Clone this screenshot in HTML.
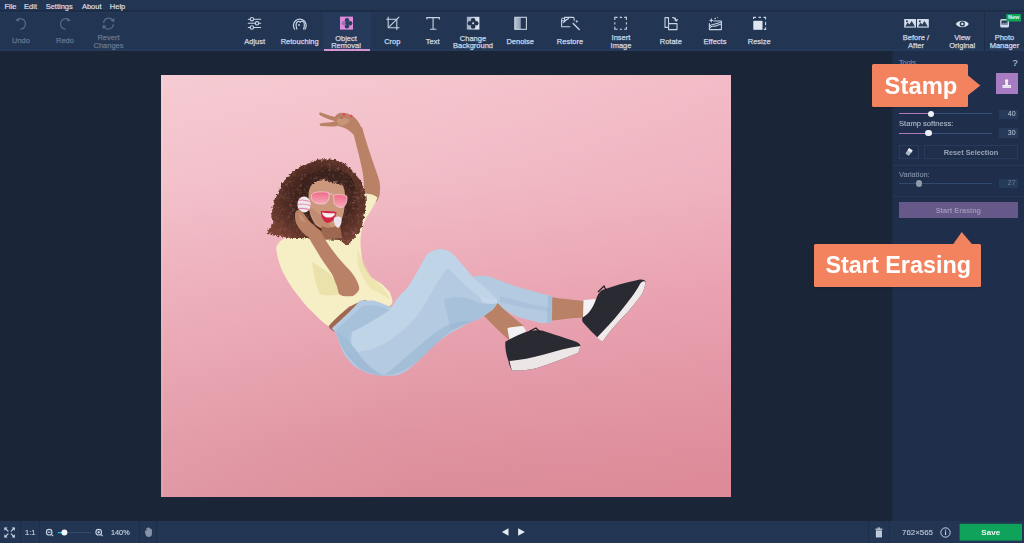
<!DOCTYPE html>
<html><head><meta charset="utf-8"><style>
*{margin:0;padding:0;box-sizing:border-box}
html,body{width:1024px;height:543px;overflow:hidden;background:#1a2537;font-family:"Liberation Sans",sans-serif}
.abs{position:absolute}
.lbl{position:absolute;line-height:8px;height:8px;color:#cdd6e3;text-align:center;white-space:nowrap;-webkit-text-stroke:0.25px currentColor}
.dis{color:#62758f}
svg{position:absolute;left:0;top:0;overflow:visible}
</style></head><body>
<div class="abs" style="left:0;top:0;width:1024px;height:51px;background:#223653"></div>
<div class="abs" style="left:0;top:10.3px;width:1024px;height:1.6px;background:#1d2d46"></div>
<div class="abs" style="left:0;top:11.9px;width:1024px;height:1px;background:#24395a"></div>
<div class="abs" style="left:0;top:48.6px;width:1024px;height:2.4px;background:#243a5a"></div>
<div class="abs" style="left:323px;top:12px;width:48px;height:39px;background:#263b5b"></div>
<div class="abs" style="left:324px;top:49.4px;width:46px;height:1.4px;background:#d592d4"></div>
<div class="abs" style="left:0;top:51px;width:892px;height:470px;background:#1a2537"></div>
<div class="abs" style="left:892px;top:51px;width:132px;height:470px;background:#1f2e4a"></div>
<div class="abs" style="left:891px;top:51px;width:1.5px;height:470px;background:#1c2840"></div>
<div class="abs" style="left:0;top:521px;width:1024px;height:22px;background:#223553"></div>
<div class="abs" style="left:4.4px;top:1.8px;font-size:7.5px;line-height:9px;color:#d8dfe9;-webkit-text-stroke:0.2px currentColor">File</div>
<div class="abs" style="left:24.1px;top:1.8px;font-size:7.5px;line-height:9px;color:#d8dfe9;-webkit-text-stroke:0.2px currentColor">Edit</div>
<div class="abs" style="left:45.7px;top:1.8px;font-size:7.5px;line-height:9px;color:#d8dfe9;-webkit-text-stroke:0.2px currentColor">Settings</div>
<div class="abs" style="left:81.9px;top:1.8px;font-size:7.5px;line-height:9px;color:#d8dfe9;-webkit-text-stroke:0.2px currentColor">About</div>
<div class="abs" style="left:109.8px;top:1.8px;font-size:7.5px;line-height:9px;color:#d8dfe9;-webkit-text-stroke:0.2px currentColor">Help</div>
<div class="lbl dis" style="left:-19.0px;top:37.3px;width:80px;font-size:7.5px;">Undo</div>
<div class="lbl dis" style="left:25.0px;top:37.3px;width:80px;font-size:7.5px;">Redo</div>
<div class="lbl dis" style="left:68.5px;top:34.4px;width:80px;font-size:7.5px;">Revert</div>
<div class="lbl dis" style="left:68.5px;top:41.7px;width:80px;font-size:7.5px;">Changes</div>
<div class="lbl " style="left:214.7px;top:37.6px;width:80px;font-size:7.5px;">Adjust</div>
<div class="lbl " style="left:259.7px;top:37.6px;width:80px;font-size:7.5px;">Retouching</div>
<div class="lbl " style="left:306.0px;top:34.5px;width:80px;font-size:7.5px;">Object</div>
<div class="lbl " style="left:306.0px;top:41.5px;width:80px;font-size:7.5px;">Removal</div>
<div class="lbl " style="left:352.3px;top:37.5px;width:80px;font-size:7.5px;">Crop</div>
<div class="lbl " style="left:392.7px;top:37.5px;width:80px;font-size:7.5px;">Text</div>
<div class="lbl " style="left:433.0px;top:34.6px;width:80px;font-size:7.5px;">Change</div>
<div class="lbl " style="left:433.0px;top:41.6px;width:80px;font-size:7.5px;">Background</div>
<div class="lbl " style="left:480.2px;top:37.5px;width:80px;font-size:7.5px;">Denoise</div>
<div class="lbl " style="left:530.0px;top:37.5px;width:80px;font-size:7.5px;">Restore</div>
<div class="lbl " style="left:581.0px;top:34.3px;width:80px;font-size:7.5px;">Insert</div>
<div class="lbl " style="left:581.0px;top:41.9px;width:80px;font-size:7.5px;">Image</div>
<div class="lbl " style="left:630.8px;top:37.5px;width:80px;font-size:7.5px;">Rotate</div>
<div class="lbl " style="left:675.0px;top:37.5px;width:80px;font-size:7.5px;">Effects</div>
<div class="lbl " style="left:719.2px;top:37.5px;width:80px;font-size:7.5px;">Resize</div>
<div class="lbl " style="left:876.0px;top:34.1px;width:80px;font-size:7.5px;">Before /</div>
<div class="lbl " style="left:876.0px;top:41.9px;width:80px;font-size:7.5px;">After</div>
<div class="lbl " style="left:922.2px;top:34.1px;width:80px;font-size:7.5px;">View</div>
<div class="lbl " style="left:922.2px;top:41.9px;width:80px;font-size:7.5px;">Original</div>
<div class="lbl " style="left:964.5px;top:34.1px;width:80px;font-size:7.5px;">Photo</div>
<div class="lbl " style="left:964.5px;top:41.9px;width:80px;font-size:7.5px;">Manager</div>
<div class="abs" style="left:984px;top:11px;width:1px;height:40px;background:#1c2c45"></div>
<svg width="1024" height="51" viewBox="0 0 1024 51"><path d="M17.2 19.6 A5.3 5.3 0 1 1 21 29.2" stroke="#566a89" stroke-width="1.2" fill="none" stroke-linecap="round"/><path d="M15.2 20.4 L19.2 17.8 L18.9 21.6Z" fill="#566a89"/><path d="M68.8 19.6 A5.3 5.3 0 1 0 65 29.2" stroke="#566a89" stroke-width="1.2" fill="none" stroke-linecap="round"/><path d="M70.8 20.4 L66.8 17.8 L67.1 21.6Z" fill="#566a89"/><path d="M103.6 23 A5.2 5.2 0 0 1 112.6 19.8" stroke="#566a89" stroke-width="1.2" fill="none"/><path d="M113.4 24.2 A5.2 5.2 0 0 1 104.4 27.4" stroke="#566a89" stroke-width="1.2" fill="none"/><path d="M114.4 17.8 L114.3 21.9 L110.5 21Z" fill="#566a89"/><path d="M102.6 29.2 L102.7 25.1 L106.5 26Z" fill="#566a89"/><g stroke="#c8d3e4" stroke-width="1.1" fill="none" stroke-linecap="round" stroke-linejoin="round"><path d="M248.3 19.2H250.2M253.6 19.2H260.7M248.3 23.3H255.3M258.7 23.3H260.7M248.3 27.5H250.2M253.6 27.5H260.7"/><circle cx="251.9" cy="19.2" r="1.7"/><circle cx="257" cy="23.3" r="1.7"/><circle cx="251.9" cy="27.5" r="1.7"/></g><g stroke="#c8d3e4" stroke-width="1.2" fill="none" stroke-linecap="round"><path d="M294.6 29.2 A6.4 6.4 0 1 1 305 29.2"/><path d="M296.8 29 C296 26.5 296 23 297.4 21.8 C298.4 21 299.4 21.4 300.2 22.2 C301 21 302.6 20.8 303.5 21.8 C304.7 23 304.6 26.6 303.6 29"/></g><circle cx="299" cy="25" r="0.9" fill="#c8d3e4"/><rect x="340" y="16.6" width="13" height="13" fill="#dc8ad9"/><g fill="#2b3f60"><circle cx="347" cy="20.2" r="2.2"/><circle cx="350.1" cy="23.2" r="2.2"/><circle cx="347" cy="26.3" r="2.2"/></g><circle cx="343.9" cy="23.2" r="2.2" fill="#a070ae"/><circle cx="347" cy="23.2" r="1.6" fill="#2b3f60"/><g stroke="#c8d3e4" stroke-width="1.1" fill="none" stroke-linecap="round" stroke-linejoin="round"><path d="M388.2 17V27.7H399"/><path d="M386.6 19.3H396.8V29.5"/><path d="M389.6 26.4L398.9 17.1"/></g><g stroke="#c8d3e4" stroke-width="1.1" fill="none"><path d="M426.8 19.6V17.6H439.4V19.6M433.1 17.6V29.2M430 29.2H436.4"/></g><defs><linearGradient id="cbg" x1="0" x2="1"><stop offset="0" stop-color="#9aa8bd"/><stop offset="0.5" stop-color="#c8d3e4"/><stop offset="1" stop-color="#dfe6f0"/></linearGradient></defs><rect x="466.8" y="16.8" width="12.6" height="12.8" fill="url(#cbg)"/><g fill="#22324e"><circle cx="473.1" cy="20.2" r="2.3"/><circle cx="476.2" cy="23.3" r="2.3"/><circle cx="473.1" cy="26.4" r="2.3"/><circle cx="470" cy="23.3" r="2.3"/><circle cx="473.1" cy="23.3" r="1.8"/></g><circle cx="473.1" cy="23.3" r="1" fill="#dfe6f0"/><defs><linearGradient id="dng" x1="0" x2="1"><stop offset="0" stop-color="#b8c3d3"/><stop offset="1" stop-color="#8d9bb1"/></linearGradient></defs><rect x="514.8" y="17.3" width="6" height="12" fill="url(#dng)"/><rect x="514.8" y="17.3" width="11.6" height="12" stroke="#c8d3e4" stroke-width="1.1" fill="none"/><g stroke="#c8d3e4" stroke-width="1.1" fill="none" stroke-linecap="round" stroke-linejoin="round"><path d="M564.5 17.4H573 C573.8 17.4 574.2 18 574.2 19V20.2"/><path d="M561.6 19.6V26.8H569.8"/><path d="M561.8 18.2H564.6V20.8H562"/><path d="M563.2 22.6 C565 21.5 566 19.2 568.6 18.6"/><path d="M573.2 23.6 L579.2 29.4" stroke-width="1.4"/><path d="M576.8 20.6V22.2M576 21.4H577.6" stroke-width="0.9"/></g><g stroke="#c8d3e4" stroke-width="1.1" fill="none"><path d="M614.8 20V17.4H617.5M619.8 17.4H622M624.2 17.4H626.4V20M626.4 22.2V24.4M626.4 26.7V29.3H624.2M622 29.3H619.8M617.5 29.3H614.8V26.7M614.8 24.4V22.2"/></g><g stroke="#c8d3e4" stroke-width="1.1" fill="none" stroke-linecap="round" stroke-linejoin="round"><path d="M668.5 23.3V17.6H665V27.4H668.2"/><rect x="668.6" y="23.6" width="8.4" height="6"/><path d="M672.6 17.6 C674.5 17.6 676 18.6 676.2 20.6"/><path d="M674.8 19.6L676.2 21L677.6 19.6"/></g><g stroke="#c8d3e4" stroke-width="1.1" fill="none" stroke-linecap="round" stroke-linejoin="round"><path d="M714 21H721.4V29.6H709.4V23.5"/><path d="M709.6 28 C712 25 714 26.5 716 26 C718 25.5 719.5 24 721.2 24.2"/><path d="M709.6 26 C711.5 24 713 24.5 715 24 C717 23.5 718.5 22.5 721.2 22.5"/></g><path d="M711.3 17.8 L712 19.7 L713.9 20.4 L712 21.1 L711.3 23 L710.6 21.1 L708.7 20.4 L710.6 19.7Z" fill="#c8d3e4"/><circle cx="715.2" cy="18.5" r="0.8" fill="#c8d3e4"/><circle cx="717.6" cy="17.3" r="0.5" fill="#c8d3e4"/><rect x="753.3" y="20.8" width="9.2" height="9" fill="#dfe6f2"/><g stroke="#c8d3e4" stroke-width="1.1" fill="none"><path d="M753.6 19V17.4H756M758.5 17.4H761M763.5 17.4H765.6V19.5M765.6 21.8V25.2M765.6 27.2V29.4H763.8"/></g><rect x="904.2" y="19" width="11.8" height="8.6" fill="#d3dcea"/><path d="M905.2 26.6 L907.7 22.5 L909.4000000000001 24.5 L911.7 21 L915.0 26.6Z" fill="#2a3b58"/><circle cx="907.0" cy="21.3" r="1" fill="#2a3b58"/><rect x="917.0" y="19" width="11.8" height="8.6" fill="#d3dcea"/><path d="M918.0 26.6 L920.5 22.5 L922.2 24.5 L924.5 21 L927.8 26.6Z" fill="#2a3b58"/><circle cx="919.8" cy="21.3" r="1" fill="#2a3b58"/><path d="M955.8 23.9 C958.5 19.6 966 19.6 968.8 23.9 C966 28.2 958.5 28.2 955.8 23.9Z" fill="#dbe3ef"/><circle cx="962.3" cy="23.9" r="2.6" fill="#2a3b58"/><circle cx="962.3" cy="23.9" r="1.2" fill="#dbe3ef"/><rect x="1000.2" y="19" width="8.8" height="8.6" rx="1.5" fill="#d3dcea"/><rect x="1001.5" y="20.5" width="6.2" height="4" fill="#2a3b58"/><path d="M1001.5 24.5L1003.5 22.5L1005 23.8L1007.7 21.5V24.5Z" fill="#8796ad"/><rect x="1006.3" y="14" width="14.7" height="7.5" fill="#12a35b"/></svg>
<div class="abs" style="left:1006.3px;top:14px;width:14.7px;height:7.5px;font-size:5.5px;line-height:7.5px;font-weight:bold;color:#e8f6ee;text-align:center">New</div>
<div class="abs" style="left:161px;top:75px;width:570px;height:422px;background:linear-gradient(180deg,#f5c6ce 0%,#f1bcc6 25%,#eba9b6 50%,#e49ca9 72%,#df929f 88%,#dc8d9a 100%)"></div>
<div class="abs" style="left:161.5px;top:75px;width:1px;height:422px;background:rgba(255,235,240,0.12)"></div>
<div class="abs" style="left:161px;top:75px;width:570px;height:422px;background:linear-gradient(90deg,rgba(255,236,240,0.12) 0%,rgba(255,236,240,0) 45%,rgba(225,110,140,0.12) 100%)"></div>
<svg style="left:161px;top:75px" width="570" height="422" viewBox="161 75 570 422"><defs><filter id="soft" x="-5%" y="-5%" width="110%" height="110%"><feGaussianBlur stdDeviation="0.45"/></filter></defs><g filter="url(#soft)"><path d="M351 131 C355 129 359 128 362 127 C366 142 371 156 375 168 C378 176 381 184 380 190 C380 196 378 200 376 202 L365 200 C364 190 364 182 363 174 C361 162 357 148 353.5 134Z" fill="#b98165"/><path d="M319.2 113.8 C319 112.6 320.4 112.2 321.6 112.8 C326 114.6 331 116.2 336 117.2 L337 121.6 C331 120.6 325 118 320.4 115.6 C319.8 115.2 319.3 114.6 319.2 113.8Z" fill="#b98165"/><path d="M319.6 124.6 C319.6 123.6 320.6 123.2 321.6 123.2 C326 122.8 331 122.4 336 121.6 L337 126.2 C331 126.6 326 126.4 321.4 126 C320.4 125.8 319.7 125.4 319.6 124.6Z" fill="#b98165"/><path d="M334.5 117.5 C336 114.5 339 112.6 342.5 112.8 C346 113 349 114 352 115.5 C356 118 359.5 123 361.6 128 L361.6 131 L353.5 134.5 C350 131 346 128 341 126.8 C338 126.4 335.5 125 334.5 122.5Z" fill="#b98165"/><path d="M337 119 C340 117 346 117.5 350 120 C348 124 344 126 340 125.5 C337.5 124 336.5 122 337 119Z" fill="#c99a80" opacity="0.8"/><circle cx="343.9" cy="114.6" r="1.3" fill="#ee3d5a"/><circle cx="351.3" cy="116" r="1.2" fill="#ee3d5a"/><circle cx="341.6" cy="118.2" r="0.9" fill="#d8445a"/><path d="M276.1 247.3 C277 245 279 243 280.1 241.2 C284 238.5 288 236.5 292.3 235.1 C297 233.5 303 232 308.5 231.1 C315 231 322 232 328.7 233.1 C334 235 340 238 345 241.2 L352 240 C355 232 358 224 361 216 C362 208 363 200 364 194 C368 193.5 373 194 377.5 197.5 C375 204 371 211 366 218 C362 226 360.5 234 360.5 242 C360.5 248 361.5 256 363.2 265.5 C366 270 368 274 371.3 277.6 C375 280 378 282 381.4 283.7 C384 286 387 289 389.5 291.8 C391 295 392 298 392.5 301.9 C392 304 391 305 389.5 306 C387 307 384 308 381.4 308 C376 306 371 304 367 302 C360 304 354 306 349 306 C344 312 338 318 334.8 320.2 C332 322 330 324 328.7 326.2 C323 323 318 318 312.5 312.1 C307 307 302 301 298.4 295.9 C294 291 291 286 288.2 281.7 C285 276 282 271 280.1 265.5 C278 259 276.5 253 276.1 247.3Z" fill="#f6efc5"/><path d="M312 262 C318 266 326 270 332 276 C336 282 338 288 339 294 C332 296 326 296 320 294 C316 286 314 276 312 262Z" fill="#e9dea4" opacity="0.8"/><path d="M357 249 C362 258 366 268 372 278 C380 284 386 290 391 300 C384 296 378 292 372 290 C366 284 362 276 358 266Z" fill="#e9dea4" opacity="0.6"/><defs><radialGradient id="hg" cx="0.55" cy="0.45" r="0.6"><stop offset="0" stop-color="#2e1a16"/><stop offset="0.55" stop-color="#4a2821"/><stop offset="1" stop-color="#7a4234"/></radialGradient><filter id="frizz" x="-10%" y="-10%" width="120%" height="120%"><feTurbulence type="fractalNoise" baseFrequency="0.35" numOctaves="2" seed="3" result="n"/><feDisplacementMap in="SourceGraphic" in2="n" scale="5" xChannelSelector="R" yChannelSelector="G"/><feGaussianBlur stdDeviation="0.4"/></filter><filter id="htex" x="0" y="0" width="100%" height="100%"><feTurbulence type="turbulence" baseFrequency="0.25" numOctaves="2" seed="5"/><feColorMatrix values="0 0 0 0 0.62  0 0 0 0 0.35  0 0 0 0 0.28  1.6 0 0 0 -0.45"/><feComposite in2="SourceGraphic" operator="in"/></filter></defs><g filter="url(#frizz)"><path d="M265.7 233.8 C268 230 271 227 273 223.7 C271 219 271 214 272.1 210.8 C273 205 274 200 276.7 196 C279 190 281 185 284.1 181.3 C288 176 291 173 295.2 170.3 C300 166 305 164 309.9 162.9 C315 160 320 159 324.6 159.2 C330 159 335 160 339.4 161 C344 163 347 165 350.4 168.4 C354 172 357 176 359.7 179.5 C362 184 364 189 365.2 194.2 C366 200 366 205 365.2 210.8 C365 216 363 222 361.5 227.4 C359 232 357 235 354.1 238.4 C352 241 349 243 346.8 245.8 L340 240 L300 238 C292 238 286 238 280.4 236.6 C276 236 271 235 265.7 233.8Z" fill="url(#hg)"/><path d="M265.7 233.8 C268 230 271 227 273 223.7 C271 219 271 214 272.1 210.8 C273 205 274 200 276.7 196 C279 190 281 185 284.1 181.3 C288 176 291 173 295.2 170.3 C300 166 305 164 309.9 162.9 C315 160 320 159 324.6 159.2 C330 159 335 160 339.4 161 C344 163 347 165 350.4 168.4 C354 172 357 176 359.7 179.5 C362 184 364 189 365.2 194.2 C366 200 366 205 365.2 210.8 C365 216 363 222 361.5 227.4 C359 232 357 235 354.1 238.4 C352 241 349 243 346.8 245.8 L340 240 L300 238 C292 238 286 238 280.4 236.6 C276 236 271 235 265.7 233.8Z" fill="#000" filter="url(#htex)" opacity="0.4"/></g><path d="M308.5 196 C308.5 187 313 180.5 321 179 C330 177.5 339 180 343 186 C346 192 345.5 202 344 211 C343 218 340 225 334 228.5 C329 230.5 322 229.5 317 226 C312 221 309 213 308.6 205Z" fill="#cb987e"/><path d="M309 206 C311 214 314 221 319 226 C324 229.5 330 230 334 228.5 C330 226 326 222 322 216 C316 212 312 208 309 206Z" fill="#b98266" opacity="0.6"/><g filter="url(#frizz)"><path d="M302 184 C305 176 313 170 323 168.5 C334 168 344 170 350 176 C354 182 355 188 353 193 C350 188 345 184.5 340 183.5 C336 182 333 183 330 181.5 C326 179.5 322 179 318 180 C313 181.5 310 186 307 190 L304.5 194Z" fill="#3a211b"/><path d="M302 184 C305 176 313 170 323 168.5 C334 168 344 170 350 176 C354 182 355 188 353 193 C350 188 345 184.5 340 183.5 C336 182 333 183 330 181.5 C326 179.5 322 179 318 180 C313 181.5 310 186 307 190 L304.5 194Z" fill="#000" filter="url(#htex)" opacity="0.4"/></g><defs><linearGradient id="lens" x1="0" y1="0" x2="0" y2="1"><stop offset="0" stop-color="#ef6a88"/><stop offset="1" stop-color="#f6a9b9"/></linearGradient></defs><path d="M311.5 194.5 C314 191.5 322 191.3 328.6 192.6 C330 196.5 329 201.5 325.5 203.5 C320 204.8 314.5 203.5 312.2 200.5 C311.4 198.5 311.2 196.5 311.5 194.5Z" fill="url(#lens)" stroke="#f4d2da" stroke-width="0.7"/><path d="M333.6 195.5 C337 194 343.5 194.2 347 196.6 C347.5 201 346 206 342.5 207.4 C338.5 207.8 335 205.8 334 202.5Z" fill="url(#lens)" stroke="#f4d2da" stroke-width="0.7"/><path d="M328.6 194 C330.5 193.4 332 193.8 333.6 195.5" stroke="#f4d2da" stroke-width="0.7" fill="none"/><path d="M320.8 211 C326 210.8 331.5 211 336.6 212 C336 217 333 222.5 328 223 C323.5 223 321 217 320.8 211Z" fill="#d12b47"/><path d="M322 212.4 C326 213 331 213.2 335.2 213.4 C334.5 216 332 217.6 328 217.6 C324.6 217.4 322.6 215 322 212.4Z" fill="#f7f1f3"/><path d="M322 226 C328 229 334 228 340 224 L342 238 L320 240Z" fill="#9d684f"/><ellipse cx="304" cy="204.5" rx="6.6" ry="8" fill="#efe8ee"/><path d="M298.5 200.5 C301.5 199.5 305.5 200 309.5 201.5 M297.8 204.5 C301.5 203.5 305.5 204 310.2 205.5 M298.6 208.6 C301.8 208 305.5 208.5 309.2 209.6" stroke="#e48aa4" stroke-width="1.1" fill="none"/><path d="M334 218 C337 216 340 216 341.5 218 C342 222 341 226 338 228 C336 227 334.5 225 334 222Z" fill="#ece4ea"/><path d="M306.5 233 C311 231 316 230 320.6 231 C325 240 330 247 334.8 253.3 C339 259 344 264 349 269.5 C353 274 356 278 358.1 283.7 C359 286 359.5 288 359.1 289.8 C358 292 356 294 353 295.9 C350 296.5 346 296.5 342.9 295.9 C340 295 339 294 338.9 293.8 C338 291 337.5 288 336.8 285.7 C335 282 334 279 332.8 275.6 C329 269 324 263 320.6 257.4 C317 251 312 244 308.5 237.1Z" fill="#b98165"/><path d="M295 214 C295.5 210.5 298 209 300.5 210.5 C303 212 305 215 307 218 C309 221 313 225 317 228 C319 229.5 320.5 230.5 321 232 C318 235 313 237 308.5 237 C303 234 299 229 296.5 224 C295 220 294.8 217 295 214Z" fill="#b98165"/><path d="M298.5 213 C301 214.5 303.5 218 306 222 C303 222.5 300.5 220.5 299 217Z" fill="#c99a80" opacity="0.7"/><path d="M328.7 326.2 C333 321 340 314 348 308 C354 304 360 301 366 300 L368 304 C360 308 352 314 344 320 C340 324 337 328 335.5 332 C332 331 330 329 328.7 326.2Z" fill="#9d684f"/><path d="M470 280 C474 277 476 276 477.9 275.6 C482 276 486 276 489.5 276.5 C498 280 507 283 516 286.4 C527 289.5 538 292.5 549.2 295.5 L552.5 296.4 C553 305 552.5 314 551.7 322.9 C548 323 544.5 323 541 322.9 C533 321 524 319 516 316.3 C510 313 504 310 499.5 306.3 L480 300Z" fill="#b3cae1"/><path d="M548 296 L552.5 296.4 C553 305 552.5 314 551.7 322.9 L547 322.9 C547.5 314 548 305 548 296Z" fill="#9ab5d2" opacity="0.6"/><path d="M500 296 C512 299 530 304 550 308 L550 312 C530 309 514 306 500 302Z" fill="#9ab5d2" opacity="0.35"/><path d="M552.3 297.3 C562 299 574 300 585 301 L583.5 317.5 C572 318 562 319.5 552 320.5Z" fill="#b98165"/><path d="M483 306 C488 303 494 300 497.8 303 C504 310 514 318 524 326 L510 341 C502 334 492 324 484 316Z" fill="#b98165"/><path d="M332 328.5 C333 327 334 326 335.5 325 C342 319 352 310 360 300.5 L374 300.5 C380 302 386 305 391.4 307.5 C394 303 397 298.5 400.2 295.2 C402 293 404 291 405.4 290 C412 282 418 270 426.5 254.9 C430 252 435 249.5 439.8 249.1 C443 249 446 250 449.7 251.6 C453 254 456 257 458 259.9 C462 264 466 269 469.6 273.2 C472 276 475 279 478 281.5 C482 285 486 288 489.5 291.4 C492 294 494 296 496.2 298 C497 299.5 497.5 301 497.8 303 C496 305.5 494.5 307.5 492.9 309.6 C489 312.5 485 315 481.2 317.9 C478 319.5 475.5 320.5 473 321.2 C466 324 460 328 454 331 C447 335 440 340 433.4 346 C428 351 424 356 419.4 360 C415 364 411 367 407.2 370.4 C403 373 399 375 395 375.7 L381 375.7 C376 375 370 374 365.2 372.2 C361 370 357 368 353 365.2 C350 362 347 358 344.2 354.7 C342 350 340.5 346 339 342.5 C337.5 339 336.5 335.5 335.5 332 C334.5 331 333 330 332 328.5Z" fill="#b3cae1"/><path d="M391.4 307.5 C394 303 397 298.5 400.2 295.2 C402 293 404 291 405.4 290 C412 282 418 270 426.5 254.9 C430 252 435 249.5 439.8 249.1 C443 249 446 250 449.7 251.6 C453 254 456 257 458 259.9 C462 264 466 269 469.6 273.2 C472 276 475 279 478 281.5 C482 285 486 288 489.5 291.4 C492 294 494 296 496.2 298 C490 300 484 300 478 296 C468 288 456 276 448 268 C440 276 432 292 424 306 C414 322 400 334 384 344 C372 350 362 352 354 352 C350 346 348 340 348 334 C364 326 378 318 391.4 307.5Z" fill="#c3d6ea" opacity="0.8"/><path d="M444 300 C452 296 462 296 472 300 C480 304 488 306 497 303 C494 308 488 312 481 318 C472 322 462 326 452 330 C448 320 446 310 444 300Z" fill="#9ab5d2" opacity="0.45"/><path d="M336 332 C340 346 348 360 362 370 C368 373 376 375 384 376 C372 370 362 360 356 350 C350 342 344 336 336 332Z" fill="#9ab5d2" opacity="0.7"/><path d="M336 330 C342 324 352 316 362 306 L372 305 C380 306 386 308 390 310 C378 318 364 326 352 332 C350 342 352 352 358 360 C348 354 340 344 336 330Z" fill="#a3bdd8" opacity="0.7"/><path d="M384 375.5 C399 375 411 367 419.4 360 C428 351 440 340 447.4 333.7 C455 328 466 323 473 321 C464 320 454 322 446 326 C434 332 424 342 412 352 C402 360 394 368 384 375.5Z" fill="#9ab5d2" opacity="0.6"/><path d="M480 296 C486 299 492 300 496.2 298 C497 299.5 497.5 301 497.8 303 C494 304 488 304 482 302Z" fill="#c9dbec" opacity="0.8"/><path d="M507.5 328 C512 327 518 326 523 326 C526 330 528 336 529 343 C524 345 518 347 512 348 C510 342 508 334 507.5 328Z" fill="#f3f1f3"/><path d="M583.5 300 L595.5 299 L597 316 L583 317.5Z" fill="#f3f1f3"/><path d="M596 299.5 C598 294 600 291 603 289.8 C614 286 626 282 637.8 279.9 C642 279 646 280 645.6 282 C645 286 644 290 642 294 C636 302 630 310 622 318 C614 326 608 334 602.5 341.7 C600 340 598 338 596 336 C590 330 585 325 582.6 321.8 C582 320 582 319 582.5 317.5 C588 315 593 308 596 299.5Z" fill="#2a2a33"/><path d="M645.6 282 C645 286 644 290 642 294 C636 302 630 310 622 318 C614 326 608 334 602.5 341.7 C600 340 598.5 339 597 337.5 C604 330 612 322 620 312 C628 302 636 292 640 284 C642 281 644 280.5 645.6 282Z" fill="#efe9ea"/><path d="M598 292 L604 286 L606 290" stroke="#1a1a20" stroke-width="1.2" fill="none"/><path d="M505.3 341.7 C514 337 522 333 529.6 330.7 C534 330 540 330 542.9 330.7 C552 334 566 338 576 341.7 C579 343 581 345 580.4 346.1 C580 348 579 351 578.2 352.8 C566 358 550 364 536.3 368.2 C528 370 518 371 512 370.4 C510 367 509 364 508.6 361.6 C506 354 505 348 505.3 341.7Z" fill="#292931"/><path d="M580.4 346.1 C580 348 579 351 578.2 352.8 C566 358 550 364 536.3 368.2 C528 370 518 371 512 370.4 C511 367 510 364 509.5 361 C520 360 532 358 544 354.5 C556 351 568 348 580.4 346.1Z" fill="#ece6e7"/><path d="M530 331 L536 328 L540 332" stroke="#1a1a20" stroke-width="1.2" fill="none"/></g></svg>
<div class="abs" style="left:899px;top:57.6px;height:10px;line-height:10px;font-size:7.2px;color:#7f8ea6;white-space:nowrap;-webkit-text-stroke:0.15px currentColor;">Tools</div>
<div class="abs" style="left:1012.5px;top:58px;height:10px;line-height:10px;font-size:9px;color:#c0cadb;white-space:nowrap;-webkit-text-stroke:0.15px currentColor;font-weight:normal">?</div>
<div class="abs" style="left:996.3px;top:73.1px;width:21.4px;height:21.2px;background:#a77cc3"></div>
<svg style="left:0;top:0" width="1024" height="543"><path d="M1005.3 85V81.6 C1004.6 80.8 1004.9 79.3 1006.6 79.3 C1008.3 79.3 1008.6 80.8 1007.9 81.6V85Z" fill="#f4eef8"/><rect x="1002.5" y="85" width="8.5" height="2.9" fill="#f4eef8"/><rect x="1003" y="86.4" width="7.5" height="0.5" fill="#d9c4e6"/></svg>
<div class="abs" style="left:899px;top:113.2px;width:93px;height:1px;background:#36507a"></div><div class="abs" style="left:899px;top:113.10000000000001px;width:32.10000000000002px;height:1.2px;background:#b07ab8"></div><div class="abs" style="left:927.9px;top:110.5px;width:6.4px;height:6.4px;border-radius:50%;background:#eef1f6"></div>
<div class="abs" style="left:998.6px;top:110.2px;width:19px;height:8.599999999999994px;background:#263a5a;color:#c5cfdd;font-size:7px;line-height:8.599999999999994px;text-align:right;padding-right:2px">40</div>
<div class="abs" style="left:899px;top:119.2px;height:10px;line-height:10px;font-size:7.6px;color:#a9b5c6;white-space:nowrap;-webkit-text-stroke:0.15px currentColor;">Stamp softness:</div>
<div class="abs" style="left:899px;top:132.6px;width:93px;height:1px;background:#36507a"></div><div class="abs" style="left:899px;top:132.5px;width:29.5px;height:1.2px;background:#b07ab8"></div><div class="abs" style="left:925.3px;top:129.9px;width:6.4px;height:6.4px;border-radius:50%;background:#eef1f6"></div>
<div class="abs" style="left:998.6px;top:128.4px;width:19px;height:9.400000000000006px;background:#263a5a;color:#c5cfdd;font-size:7px;line-height:9.400000000000006px;text-align:right;padding-right:2px">30</div>
<div class="abs" style="left:899px;top:145px;width:20px;height:14px;border:1px solid #2a3d5c"></div>
<svg style="left:0;top:0" width="1024" height="543"><g transform="translate(909,152) rotate(35)"><rect x="-2.2" y="-3.3" width="4.4" height="6.6" rx="0.8" fill="#aab6c8"/><rect x="-2.2" y="-3.3" width="4.4" height="2.8" fill="#e6ebf2"/></g></svg>
<div class="abs" style="left:924px;top:145px;width:94px;height:14px;border:1px solid #283b59;color:#98a4b7;font-weight:bold;font-size:7.35px;line-height:13.5px;text-align:center">Reset Selection</div>
<div class="abs" style="left:893px;top:164.5px;width:131px;height:1px;background:#253854"></div>
<div class="abs" style="left:899px;top:170.3px;height:10px;line-height:10px;font-size:7.4px;color:#7f8ea6;white-space:nowrap;-webkit-text-stroke:0.15px currentColor;">Variation:</div>
<div class="abs" style="left:899px;top:183.1px;width:93px;height:1px;background:#32496e"></div><div class="abs" style="left:915.7px;top:180.29999999999998px;width:6.6px;height:6.6px;border-radius:50%;background:#8e9aab"></div>
<div class="abs" style="left:998.6px;top:179.4px;width:19px;height:8.299999999999983px;background:#263a5a;color:#6f7f98;font-size:7px;line-height:8.299999999999983px;text-align:right;padding-right:2px">27</div>
<div class="abs" style="left:893px;top:195.5px;width:131px;height:1px;background:#253854"></div>
<div class="abs" style="left:899px;top:202.2px;width:118.7px;height:15.7px;background:#67588a;color:#9d95b6;font-weight:bold;font-size:7.3px;line-height:17.2px;text-align:center">Start Erasing</div>
<div class="abs" style="left:19.5px;top:521px;width:1px;height:22px;background:#1d2e48"></div>
<div class="abs" style="left:39px;top:521px;width:1px;height:22px;background:#1d2e48"></div>
<div class="abs" style="left:139px;top:521px;width:1px;height:22px;background:#1d2e48"></div>
<div class="abs" style="left:156px;top:521px;width:1px;height:22px;background:#1d2e48"></div>
<div class="abs" style="left:868px;top:521px;width:1px;height:22px;background:#1d2e48"></div>
<div class="abs" style="left:888.8px;top:521px;width:1px;height:22px;background:#1d2e48"></div>
<div class="abs" style="left:25px;top:527.7px;height:10px;line-height:10px;font-size:7.5px;color:#c5cfdd;white-space:nowrap;-webkit-text-stroke:0.15px currentColor;">1:1</div>
<div class="abs" style="left:111px;top:527.7px;height:10px;line-height:10px;font-size:7.3px;color:#c5cfdd;white-space:nowrap;-webkit-text-stroke:0.15px currentColor;">140%</div>
<div class="abs" style="left:902px;top:527.7px;height:10px;line-height:10px;font-size:7.9px;color:#b9c4d4;white-space:nowrap;-webkit-text-stroke:0.15px currentColor;">762×565</div>
<svg style="left:0;top:0" width="1024" height="543"><g stroke="#c8d3e4" stroke-width="1.2" fill="none" stroke-linecap="round"><path d="M5 528.2L8 531.2M14.2 528.2L11.2 531.2M5 536.8L8 533.8M14.2 536.8L11.2 533.8"/></g><g fill="#c8d3e4"><path d="M4.4 527.5H7.6L4.4 530.7Z"/><path d="M14.8 527.5H11.6L14.8 530.7Z"/><path d="M4.4 537.4H7.6L4.4 534.2Z"/><path d="M14.8 537.4H11.6L14.8 534.2Z"/></g><g stroke="#c8d3e4" stroke-width="1.1" fill="none"><circle cx="49.2" cy="532.2" r="2.8"/><path d="M51.3 534.3L53.2 536.2"/><path d="M47.8 532.2H50.6"/><circle cx="98.7" cy="532.2" r="2.8"/><path d="M100.8 534.3L102.7 536.2"/><path d="M97.3 532.2H100.1M98.7 530.8V533.6"/></g><rect x="58" y="532.2" width="33" height="0.9" fill="#3a5072"/><rect x="57.8" y="532" width="6.5" height="1.3" fill="#1fb6e6"/><circle cx="64.4" cy="532.6" r="3" fill="#f2f5f9"/><path d="M145 532 C144.5 530.5 145.8 530 146.4 531 L146.4 528.6 C146.4 527.6 147.6 527.6 147.7 528.6 L147.7 528 C147.8 527 149 527 149.1 528 L149.2 528.4 C149.3 527.5 150.4 527.6 150.5 528.5 L150.6 529.6 C150.8 528.8 151.9 528.9 151.9 529.8 L151.9 534 C151.9 536 150.5 537 148.8 537 C147 537 146.3 536.2 145.6 534.8Z" fill="#8693a8"/><path d="M508.5 528.3V535.7L501.9 532Z" fill="#e6ebf2"/><path d="M518.1 528.3V535.7L524.9 532Z" fill="#e6ebf2"/><rect x="875.4" y="528.6" width="7" height="1.2" fill="#c8d3e4"/><rect x="877.6" y="527.5" width="2.6" height="1.2" fill="#c8d3e4"/><rect x="875.9" y="530.4" width="6" height="7" fill="#c8d3e4"/><path d="M877.9 531.5V536.3M879.9 531.5V536.3" stroke="#9aa7ba" stroke-width="0.6"/><circle cx="945.5" cy="532.5" r="4.7" stroke="#c8d3e4" stroke-width="1" fill="none"/><rect x="945" y="531.4" width="1.1" height="3.6" fill="#c8d3e4"/><rect x="945" y="529.6" width="1.1" height="1.1" fill="#c8d3e4"/><rect x="959.6" y="523.8" width="62.4" height="16.8" fill="#0fa25a"/></svg>
<div class="abs" style="left:959.6px;top:524.8px;width:62.4px;height:16.8px;line-height:16.8px;text-align:center;font-weight:bold;font-size:8.1px;color:#eef7f1">Save</div>
<div class="abs" style="left:872.2px;top:64.3px;width:96px;height:42.6px;background:#f3835f;border-radius:1.5px;box-shadow:0 1px 1.5px rgba(0,0,0,0.15)"></div>
<svg style="left:0;top:0" width="1024" height="543"><path d="M968 75.5L980.3 85.4L968 95.3Z" fill="#f3835f"/><path d="M953.3 243.9L961.7 232.1L971.9 243.9Z" fill="#f3835f"/></svg>
<div class="abs" style="left:884.6px;top:71px;height:30px;line-height:30px;font-size:23.8px;font-weight:bold;color:#fff">Stamp</div>
<div class="abs" style="left:814px;top:243.8px;width:166.7px;height:43.3px;background:#f3835f;border-radius:1.5px;box-shadow:0 1px 1.5px rgba(0,0,0,0.15)"></div>
<div class="abs" style="left:825.4px;top:250px;height:30px;line-height:30px;font-size:23.4px;font-weight:bold;color:#fff">Start Erasing</div>
</body></html>
